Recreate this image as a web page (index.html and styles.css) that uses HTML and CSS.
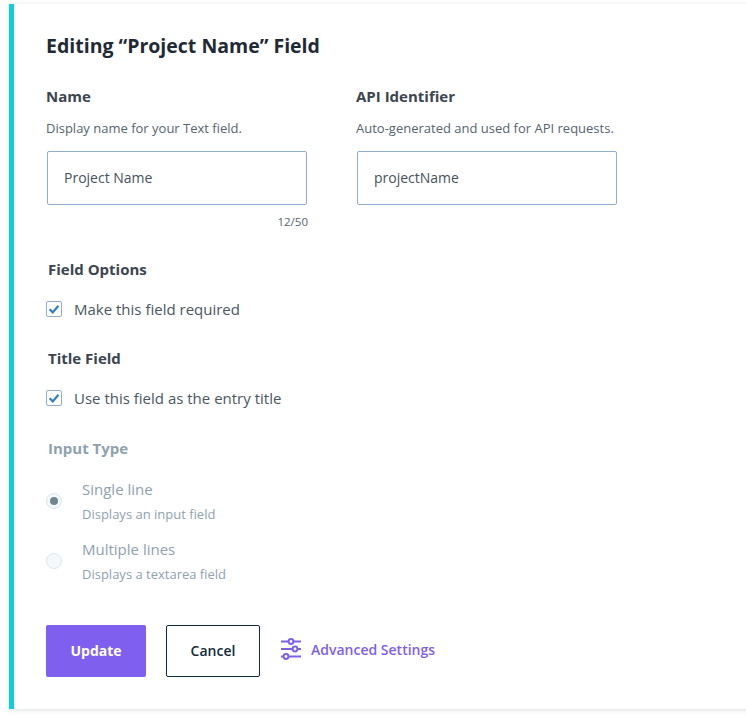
FILE: index.html
```html
<!DOCTYPE html>
<html lang="en">
<head>
<meta charset="utf-8">
<title>Editing Field</title>
<link rel="stylesheet" href="styles.css">
</head>
<body>
<main class="card">
  <h1 class="title">Editing “Project Name” Field</h1>
  <div class="fields">
    <div class="field">
      <label class="label">Name</label>
      <p class="help">Display name for your Text field.</p>
      <div class="input">Project Name</div>
      <div class="counter">12/50</div>
    </div>
    <div class="field">
      <label class="label">API Identifier</label>
      <p class="help">Auto-generated and used for API requests.</p>
      <div class="input">projectName</div>
    </div>
  </div>
  <section class="group group-options">
    <h2 class="group-title">Field Options</h2>
    <div class="check">
      <span class="box"><svg viewBox="0 0 16 16" width="16" height="16"><path d="M3.6 8.2 6.8 11.4 12.4 4.8" fill="none" stroke="#2f7fc8" stroke-width="2.2"/></svg></span>
      <span>Make this field required</span>
    </div>
  </section>
  <section class="group group-title-field">
    <h2 class="group-title">Title Field</h2>
    <div class="check">
      <span class="box"><svg viewBox="0 0 16 16" width="16" height="16"><path d="M3.6 8.2 6.8 11.4 12.4 4.8" fill="none" stroke="#2f7fc8" stroke-width="2.2"/></svg></span>
      <span>Use this field as the entry title</span>
    </div>
  </section>
  <section class="group group-input">
    <h2 class="group-title muted">Input Type</h2>
    <div class="radio radio-first">
      <span class="dot selected"></span>
      <div>
        <div class="radio-name">Single line</div>
        <div class="radio-help">Displays an input field</div>
      </div>
    </div>
    <div class="radio">
      <span class="dot"></span>
      <div>
        <div class="radio-name">Multiple lines</div>
        <div class="radio-help">Displays a textarea field</div>
      </div>
    </div>
  </section>
  <div class="actions">
    <button class="btn primary">Update</button>
    <button class="btn secondary">Cancel</button>
    <a class="advanced">
      <svg viewBox="0 0 20 22" width="20" height="22" fill="none" stroke="#7f5fee" stroke-width="2">
        <path d="M0 3.5H20M0 11H20M0 18.5H20"/>
        <circle cx="10" cy="3.5" r="2.4" fill="#fff"/>
        <circle cx="14" cy="11" r="2.4" fill="#fff"/>
        <circle cx="5" cy="18.5" r="2.4" fill="#fff"/>
      </svg>
      <span>Advanced Settings</span>
    </a>
  </div>
</main>
</body>
</html>
```
FILE: styles.css
```css
* { box-sizing: border-box; }
html, body { margin: 0; padding: 0; background: #fff; overflow: hidden; }
body { width: 746px; height: 719px; padding: 4px 0 0 9px; font-family: "Open Sans", sans-serif; color: #3f4a56; }
.card { width: 760px; height: 705px; background: #fff; border-left: 5px solid #0fcdd9; box-shadow: 0 1px 5px rgba(40,50,60,.16); padding: 29px 0 0 32px; }
.title { margin: 0; font-size: 19.5px; line-height: 26px; font-weight: 700; color: #1f2a36; }
.fields { display: flex; gap: 50px; margin-top: 27px; }
.field { width: 260px; }
.label { display: block; font-size: 15px; line-height: 20px; font-weight: 700; color: #3c4550; }
.help { margin: 13px 0 0; font-size: 13px; line-height: 18px; color: #56646f; white-space: nowrap; }
.input { width: 260px; height: 54px; margin: 14px 0 0 1px; border: 1px solid #91add0; border-radius: 2px; padding: 0 16px; font-size: 14px; line-height: 52px; color: #47525d; }
.counter { margin: 8px -2px 0 0; text-align: right; font-size: 11.5px; line-height: 18px; color: #56646f; }
.group { margin-left: 2px; }
.group-options { margin-top: 28px; }
.group-title-field { margin-top: 28px; }
.group-input { margin-top: 29px; }
.group-title { margin: 0; font-size: 15px; line-height: 20px; font-weight: 700; color: #3c4550; }
.muted { color: #8fa2b0; }
.check { display: flex; align-items: center; gap: 12px; margin: 19px 0 0 -2px; font-size: 15px; line-height: 22px; color: #4a5763; }
.box { width: 16px; height: 16px; border: 1px solid #91add0; border-radius: 2px; display: flex; align-items: center; justify-content: center; }
.box svg { flex: none; }
.radio { display: flex; align-items: center; gap: 20px; margin: 16px 0 0 -2px; color: #8fa2b0; }
.radio-first { margin-top: 21px; }
.dot { width: 16px; height: 16px; border-radius: 50%; border: 1px solid #dde5ee; background: #f5f8fb; display: flex; align-items: center; justify-content: center; }
.dot.selected::after { content: ""; width: 8px; height: 8px; border-radius: 50%; background: #71858f; }
.radio-name { font-size: 15px; line-height: 20px; }
.radio-help { margin-top: 6px; font-size: 13px; line-height: 18px; }
.actions { display: flex; align-items: center; margin-top: 42px; }
.btn { height: 52px; border-radius: 2px; font-family: inherit; font-size: 14px; padding: 0 0 2px; }
.primary { width: 100px; background: #7f5fee; border: 0; color: #fff; font-weight: 700; }
.secondary { width: 94px; margin-left: 20px; background: #fff; border: 1px solid #0f2c3c; color: #0f2c3c; font-weight: 600; }
.advanced { display: flex; align-items: center; gap: 10px; margin: 0 0 4px 21px; color: #7f5fee; font-size: 14px; font-weight: 600; }
```
